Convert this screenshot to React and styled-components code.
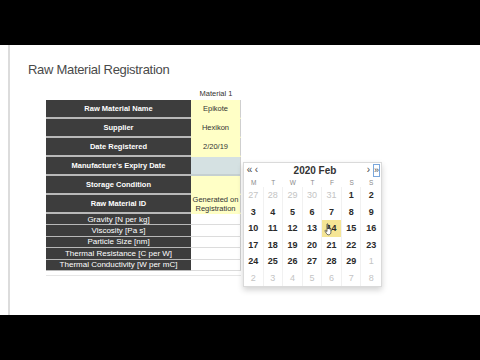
import { Fragment } from 'react';
import styled, { createGlobalStyle } from 'styled-components';

const GlobalStyle = createGlobalStyle`
  html, body {
    margin: 0;
    padding: 0;
    background: #000;
  }
  body {
    font-family: "Liberation Sans", Arial, sans-serif;
  }
`;

const Frame = styled.div`
  width: 480px;
  height: 360px;
  padding-top: 45px;
  box-sizing: border-box;
  background: #000;
  overflow: hidden;
`;

const Screen = styled.div`
  position: relative;
  height: 270px;
  padding-left: 8px;
  background: #fff;
`;

const Sheet = styled.div`
  height: 100%;
  box-sizing: border-box;
  border-left: 2px solid #dcdcdc;
  padding: 16px 0 0 18px;
`;

const Title = styled.h1`
  margin: 0;
  font-size: 13px;
  line-height: 18px;
  font-weight: 400;
  letter-spacing: -0.3px;
  color: #4a4a4a;
`;

const Table = styled.div`
  display: grid;
  grid-template-columns: 145px 50px;
  width: 195px;
  margin: 7px 0 0 18px;
`;

const HeadCell = styled.div`
  height: 14px;
  display: flex;
  align-items: center;
  justify-content: center;
  font-size: 7.5px;
  color: #333;
`;

const Label = styled.div`
  height: ${(p) => (p.$small ? '10.4px' : '17px')};
  display: flex;
  align-items: center;
  justify-content: center;
  background: #3d3d3d;
  border-bottom: ${(p) => (p.$small ? '1px' : '2px')} solid #b9b9b9;
  color: #fff;
  font-size: ${(p) => (p.$small ? '8px' : '7.5px')};
  font-weight: ${(p) => (p.$small ? 400 : 700)};
  white-space: nowrap;
`;

const Value = styled.div`
  height: ${(p) => (p.$small ? '10.4px' : '17px')};
  display: flex;
  align-items: center;
  justify-content: center;
  text-align: center;
  background: ${(p) => p.$bg || '#fff'};
  border-bottom: ${(p) => (p.$small ? '1px' : '2px')} solid
    ${(p) => p.$line || p.$bg || '#dedede'};
  border-right: 1px solid #cfcfcf;
  color: #333;
  font-size: 7.5px;
  line-height: 9px;
  white-space: pre-line;
`;

const Rule = styled.div`
  width: 195px;
  margin: 4px 0 0 18px;
  border-top: 1px solid #e6e6e6;
`;

const Picker = styled.div`
  position: absolute;
  left: 243px;
  top: 117px;
  width: 137px;
  background: #fff;
  border: 1px solid #dadada;
  box-shadow: 0 3px 6px rgba(0, 0, 0, 0.18);
`;

const PickerHead = styled.div`
  height: 14px;
  display: flex;
  align-items: center;
  padding: 0 0 0 2px;
  color: #333;
`;

const Nav = styled.span`
  font-size: 10px;
  line-height: 10px;
  width: ${(p) => p.$w || '6px'};
  text-align: center;
  color: #444;
`;

const LastNav = styled.span`
  width: 7px;
  height: 13px;
  display: flex;
  align-items: center;
  justify-content: center;
  border: 1px solid #7aa7dc;
  box-sizing: border-box;
  font-size: 9px;
  color: #444;
  margin-right: 1px;
`;

const MonthTitle = styled.span`
  flex: 1;
  text-align: center;
  font-size: 10px;
  font-weight: 700;
  color: #333;
  padding-left: 6px;
`;

const DayGrid = styled.div`
  display: grid;
  grid-template-columns: repeat(7, 1fr);
`;

const DayName = styled.div`
  height: 10px;
  display: flex;
  align-items: center;
  justify-content: center;
  font-size: 6.5px;
  color: #8a8a8a;
`;

const Day = styled.div`
  position: relative;
  height: 16.5px;
  display: flex;
  align-items: center;
  justify-content: center;
  font-size: 9px;
  font-weight: ${(p) => (p.$muted ? 400 : 700)};
  color: ${(p) => (p.$muted ? '#c4c4c4' : '#2a2a2a')};
  background: ${(p) => (p.$active ? '#f5e595' : 'transparent')};
  border-right: 1px solid #f1f1f1;
  box-sizing: border-box;
  &:nth-child(7n) {
    border-right: 0;
  }
`;

const Pointer = styled.svg`
  position: absolute;
  left: 2px;
  top: 3px;
`;

const rows = [
  { label: 'Raw Material Name', value: 'Epikote', bg: '#ffffc6' },
  { label: 'Supplier', value: 'Hexikon', bg: '#ffffc6' },
  { label: 'Date Registered', value: '2/20/19', bg: '#ffffc6' },
  { label: "Manufacture's Expiry Date", value: '', bg: '#d5e1e2', line: '#c5d0d1' },
  { label: 'Storage Condition', value: '', bg: '#ffffc6' },
  { label: 'Raw Material ID', value: 'Generated on\nRegistration', bg: '#ffffc6' },
];

const smallRows = [
  'Gravity [N per kg]',
  'Viscosity [Pa s]',
  'Particle Size [nm]',
  'Thermal Resistance [C per W]',
  'Thermal Conductivity [W per mC]',
];

const dayNames = ['M', 'T', 'W', 'T', 'F', 'S', 'S'];

const days = [
  [27, true], [28, true], [29, true], [30, true], [31, true], [1], [2],
  [3], [4], [5], [6], [7], [8], [9],
  [10], [11], [12], [13], [14], [15], [16],
  [17], [18], [19], [20], [21], [22], [23],
  [24], [25], [26], [27], [28], [29], [1, true],
  [2, true], [3, true], [4, true], [5, true], [6, true], [7, true], [8, true],
];

function App() {
  return (
    <Frame>
      <GlobalStyle />
      <Screen>
        <Sheet>
          <Title>Raw Material Registration</Title>
          <Table>
            <HeadCell />
            <HeadCell>Material 1</HeadCell>
            {rows.map((r) => (
              <Fragment key={r.label}>
                <Label>{r.label}</Label>
                <Value $bg={r.bg} $line={r.line}>
                  {r.value}
                </Value>
              </Fragment>
            ))}
            {smallRows.map((label) => (
              <Fragment key={label}>
                <Label $small>{label}</Label>
                <Value $small $line="#dcdcdc" />
              </Fragment>
            ))}
          </Table>
          <Rule />
        </Sheet>

        <Picker>
          <PickerHead>
            <Nav $w="7px">«</Nav>
            <Nav $w="7px">‹</Nav>
            <MonthTitle>2020 Feb</MonthTitle>
            <Nav $w="9px">›</Nav>
            <LastNav>»</LastNav>
          </PickerHead>
          <DayGrid>
            {dayNames.map((d, i) => (
              <DayName key={i}>{d}</DayName>
            ))}
            {days.map(([n, muted], i) => (
              <Day key={i} $muted={muted} $active={i === 18}>
                {n}
                {i === 18 && (
                  <Pointer width="10" height="13" viewBox="0 0 10 13">
                    <path
                      d="M3 1.2c0-.6.9-.6.9 0V6l.1-1.2c0-.6.9-.6.9 0V6l.1-.9c0-.6.9-.6.9 0V6.3l.1-.5c0-.6.9-.6.9 0v3.4c0 1.6-1 2.6-2.4 2.6H4.3C3.4 11.8 2.9 11.2 2.4 10.4L1 8.1c-.3-.6.4-1 .8-.6L3 8.6z"
                      fill="#fff"
                      stroke="#111"
                      strokeWidth="0.6"
                    />
                  </Pointer>
                )}
              </Day>
            ))}
          </DayGrid>
        </Picker>
      </Screen>
    </Frame>
  );
}

export default App;
